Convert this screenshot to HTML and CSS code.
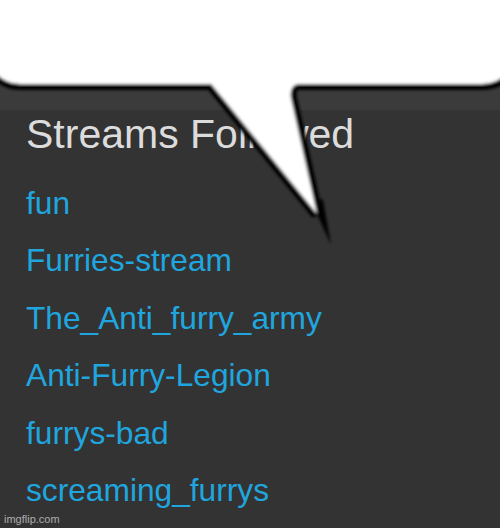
FILE: index.html
```html
<!DOCTYPE html>
<html lang="en">
<head>
  <meta charset="UTF-8">
  <meta name="viewport" content="width=device-width, initial-scale=1.0">
  <title>Streams Followed</title>
  <link rel="stylesheet" href="styles.css">
</head>
<body>
  <div class="topbar"></div>
  <div class="panel">
    <h1 class="title">Streams Followed</h1>
    <ul class="stream-list">
      <li><a href="#">fun</a></li>
      <li><a href="#">Furries-stream</a></li>
      <li><a href="#">The_Anti_furry_army</a></li>
      <li><a href="#">Anti-Furry-Legion</a></li>
      <li><a href="#">furrys-bad</a></li>
      <li><a href="#">screaming_furrys</a></li>
    </ul>
  </div>

  <!-- speech bubble laid over the top of the panel -->
  <svg class="bubble" width="500" height="260" viewBox="0 0 500 260">
    <defs>
      <filter id="soft" x="-5%" y="-5%" width="110%" height="110%">
        <feGaussianBlur stdDeviation="1.4" />
      </filter>
    </defs>
    <g filter="url(#soft)">
      <path d="M 309 196 L 323 200 L 331 245 Z" fill="#000" />
      <path class="bubble-shape"
            d="M -10 -10 H 510 V 62 Q 506 84 482 84 H 298 Q 289 86 291 98 L 317 214 L 211 84 H 20 Q 2 84 -10 66 Z" />
    </g>
  </svg>

  <div class="watermark">imgflip.com</div>
</body>
</html>
```

FILE: styles.css
```css
body {
  margin: 0;
  background-color: #333333;
  font-family: "Liberation Sans", Arial, sans-serif;
  width: 500px;
  height: 528px;
  overflow: hidden;
  position: relative;
}

.topbar {
  height: 110px;
  background-color: #3b3b3b;
}

.panel {
  padding-left: 26px;
}

.title {
  margin: 0;
  padding-top: 2px;
  font-size: 41px;
  line-height: 44px;
  font-weight: normal;
  color: #dcdcdc;
}

.stream-list {
  list-style: none;
  margin: 19px 0 0;
  padding: 0;
}

.stream-list li {
  font-size: 31.7px;
  line-height: 57.4px;
}

.stream-list a {
  color: #20a6df;
  text-decoration: none;
}

.bubble {
  position: absolute;
  top: 0;
  left: 0;
}

.bubble-shape {
  fill: #ffffff;
  stroke: #000000;
  stroke-width: 12px;
  stroke-linejoin: miter;
  paint-order: stroke;
}

.watermark {
  position: absolute;
  left: 4px;
  bottom: 3px;
  font-size: 11px;
  color: rgba(255, 255, 255, 0.6);
}
```
